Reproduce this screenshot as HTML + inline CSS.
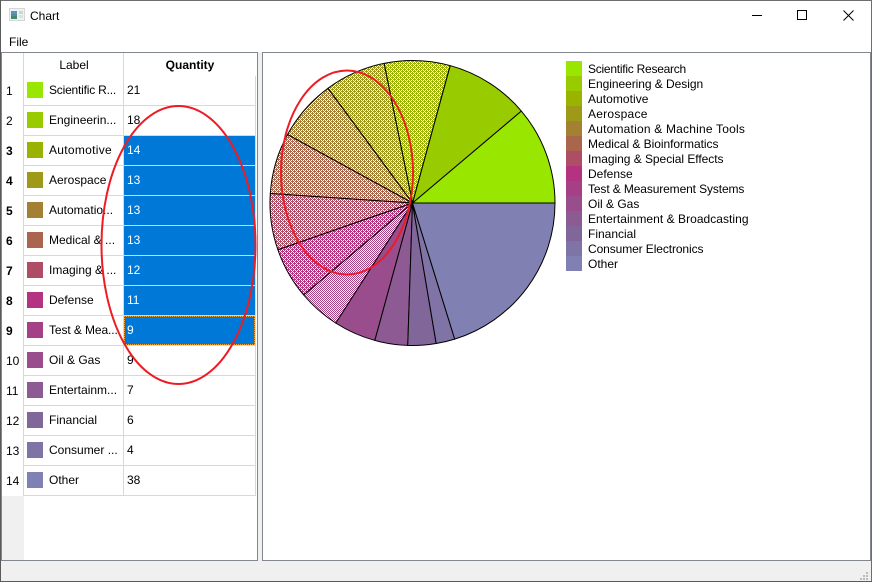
<!DOCTYPE html>
<html><head><meta charset="utf-8"><title>Chart</title>
<style>
html,body{margin:0;padding:0}
body{width:872px;height:582px;overflow:hidden;background:#f0f0f0;position:relative;font:12px/15px "Liberation Sans",sans-serif;color:#000}
div{position:absolute;box-sizing:border-box;white-space:nowrap}
.n{left:6px;width:17px;height:30px;line-height:30px}
.s{left:27px;width:16px;height:16px}
.l{left:49px;height:30px;line-height:29px;width:74px;overflow:hidden}
.v{left:127px;height:30px;line-height:29px}
.h{left:24px;width:232px;height:1px;background:#d8d8d8}
.c{left:124px;width:131px;height:29px;background:#0078d7}
.ls{left:566px;width:16px;height:15px}
.lt{left:588px;height:15px;line-height:17px}
b{font-weight:bold}
</style></head><body>
<div style="left:0;top:0;width:872px;height:52px;background:#fff"></div>
<div style="left:0;top:0;width:872px;height:1px;background:#6e6e6e"></div>
<div style="left:0;top:0;width:1px;height:582px;background:#5a5a5a"></div>
<div style="left:871px;top:0;width:1px;height:582px;background:#6e6e6e"></div>
<div style="left:0;top:581px;width:872px;height:1px;background:#5a5a5a"></div>

<svg style="position:absolute;left:9px;top:8px" width="16" height="14" shape-rendering="crispEdges">
<rect x="0" y="0" width="16" height="13" fill="#d4d6d8"/><rect x="1" y="1" width="14" height="11" fill="#f0f2f2"/>
<rect x="2" y="3" width="6" height="8" fill="#4f8fa0"/><rect x="2" y="3" width="6" height="3" fill="#5a93c8"/><rect x="2" y="8" width="6" height="3" fill="#3f8a68"/>
<rect x="10" y="3" width="4" height="3" fill="#c4dcc8"/><rect x="10" y="7" width="4" height="3" fill="#d8e2e2"/>
</svg>
<div style="left:30px;top:9px">Chart</div>
<div style="left:9px;top:35px">File</div>

<svg style="position:absolute;left:740px;top:0" width="130" height="30">
<path d="M12 15.5h10" stroke="#000" fill="none" shape-rendering="crispEdges"/>
<rect x="57.5" y="10.5" width="9" height="9" stroke="#000" fill="none" shape-rendering="crispEdges"/>
<path d="M103.5 10.5l10 10M113.5 10.5l-10 10" stroke="#000" fill="none" stroke-width="1"/>
</svg>

<!-- table -->
<div style="left:1px;top:52px;width:257px;height:509px;border:1px solid #828790;background:#fff"></div>
<div style="left:2px;top:496px;width:22px;height:64px;background:#f0f0f0"></div>
<div style="left:23px;top:53px;width:1px;height:443px;background:#d8d8d8"></div>
<div style="left:123px;top:53px;width:1px;height:443px;background:#d8d8d8"></div>
<div style="left:255px;top:76px;width:1px;height:420px;background:#d8d8d8"></div>
<div style="left:24px;top:58px;width:100px;text-align:center">Label</div>
<div style="left:124px;top:58px;width:132px;text-align:center"><b>Quantity</b></div>

<div class="h" style="top:105px"></div><div class="h" style="top:135px"></div><div class="h" style="top:165px"></div><div class="h" style="top:195px"></div><div class="h" style="top:225px"></div><div class="h" style="top:255px"></div><div class="h" style="top:285px"></div><div class="h" style="top:315px"></div><div class="h" style="top:345px"></div><div class="h" style="top:375px"></div><div class="h" style="top:405px"></div><div class="h" style="top:435px"></div><div class="h" style="top:465px"></div><div class="h" style="top:495px"></div>

<div class="c" style="top:136px"></div><div class="c" style="top:166px"></div><div class="c" style="top:196px"></div><div class="c" style="top:226px"></div><div class="c" style="top:256px"></div><div class="c" style="top:286px"></div>
<div class="c" style="top:316px;border:1px dotted #f2a33a"></div>

<div class="n" style="top:76px">1</div><div class="s" style="top:82px;background:#99e600"></div><div class="l" style="top:76px;letter-spacing:-.2px">Scientific R...</div><div class="v" style="top:76px">21</div>
<div class="n" style="top:106px">2</div><div class="s" style="top:112px;background:#99cc00"></div><div class="l" style="top:106px">Engineerin...</div><div class="v" style="top:106px">18</div>
<div class="n" style="top:136px"><b>3</b></div><div class="s" style="top:142px;background:#99b300"></div><div class="l" style="top:136px;letter-spacing:.3px">Automotive</div><div class="v" style="top:136px;color:#fff">14</div>
<div class="n" style="top:166px"><b>4</b></div><div class="s" style="top:172px;background:#9f991a"></div><div class="l" style="top:166px">Aerospace</div><div class="v" style="top:166px;color:#fff">13</div>
<div class="n" style="top:196px"><b>5</b></div><div class="s" style="top:202px;background:#a48033"></div><div class="l" style="top:196px">Automatio...</div><div class="v" style="top:196px;color:#fff">13</div>
<div class="n" style="top:226px"><b>6</b></div><div class="s" style="top:232px;background:#a9664d"></div><div class="l" style="top:226px">Medical &amp; ...</div><div class="v" style="top:226px;color:#fff">13</div>
<div class="n" style="top:256px"><b>7</b></div><div class="s" style="top:262px;background:#ae4d66"></div><div class="l" style="top:256px">Imaging &amp; ...</div><div class="v" style="top:256px;color:#fff">12</div>
<div class="n" style="top:286px"><b>8</b></div><div class="s" style="top:292px;background:#b33380"></div><div class="l" style="top:286px">Defense</div><div class="v" style="top:286px;color:#fff">11</div>
<div class="n" style="top:316px"><b>9</b></div><div class="s" style="top:322px;background:#a64086"></div><div class="l" style="top:316px;letter-spacing:-.1px">Test &amp; Mea...</div><div class="v" style="top:316px;color:#fff">9</div>
<div class="n" style="top:346px">10</div><div class="s" style="top:352px;background:#994d8d"></div><div class="l" style="top:346px">Oil &amp; Gas</div><div class="v" style="top:346px">9</div>
<div class="n" style="top:376px">11</div><div class="s" style="top:382px;background:#8d5a93"></div><div class="l" style="top:376px">Entertainm...</div><div class="v" style="top:376px">7</div>
<div class="n" style="top:406px">12</div><div class="s" style="top:412px;background:#806699"></div><div class="l" style="top:406px">Financial</div><div class="v" style="top:406px">6</div>
<div class="n" style="top:436px">13</div><div class="s" style="top:442px;background:#8073a6"></div><div class="l" style="top:436px">Consumer ...</div><div class="v" style="top:436px">4</div>
<div class="n" style="top:466px">14</div><div class="s" style="top:472px;background:#8080b3"></div><div class="l" style="top:466px">Other</div><div class="v" style="top:466px">38</div>

<!-- pie frame -->
<div style="left:262px;top:52px;width:609px;height:509px;border:1px solid #828790;background:#fff"></div>

<div class="ls" style="top:61px;background:#99e600"></div><div class="lt" style="top:61px;letter-spacing:-.25px">Scientific Research</div>
<div class="ls" style="top:76px;background:#99cc00"></div><div class="lt" style="top:76px;letter-spacing:-.05px">Engineering &amp; Design</div>
<div class="ls" style="top:91px;background:#99b300"></div><div class="lt" style="top:91px;letter-spacing:.05px">Automotive</div>
<div class="ls" style="top:106px;background:#9f991a"></div><div class="lt" style="top:106px;letter-spacing:.25px">Aerospace</div>
<div class="ls" style="top:121px;background:#a48033"></div><div class="lt" style="top:121px;letter-spacing:.2px">Automation &amp; Machine Tools</div>
<div class="ls" style="top:136px;background:#a9664d"></div><div class="lt" style="top:136px;letter-spacing:-.04px">Medical &amp; Bioinformatics</div>
<div class="ls" style="top:151px;background:#ae4d66"></div><div class="lt" style="top:151px;letter-spacing:-.04px">Imaging &amp; Special Effects</div>
<div class="ls" style="top:166px;background:#b33380"></div><div class="lt" style="top:166px">Defense</div>
<div class="ls" style="top:181px;background:#a64086"></div><div class="lt" style="top:181px;letter-spacing:-.12px">Test &amp; Measurement Systems</div>
<div class="ls" style="top:196px;background:#994d8d"></div><div class="lt" style="top:196px">Oil &amp; Gas</div>
<div class="ls" style="top:211px;background:#8d5a93"></div><div class="lt" style="top:211px;letter-spacing:.04px">Entertainment &amp; Broadcasting</div>
<div class="ls" style="top:226px;background:#806699"></div><div class="lt" style="top:226px">Financial</div>
<div class="ls" style="top:241px;background:#8073a6"></div><div class="lt" style="top:241px;letter-spacing:-.1px">Consumer Electronics</div>
<div class="ls" style="top:256px;background:#8080b3"></div><div class="lt" style="top:256px">Other</div>

<svg style="position:absolute;left:0;top:0" width="872" height="582">
<defs>
<pattern id="p3" width="4" height="4" patternUnits="userSpaceOnUse"><path fill="#99b300" shape-rendering="crispEdges" d="M0 0h1v1h-1zM2 0h1v1h-1zM0 1h2v1h-2zM3 1h1v1h-1zM0 2h1v1h-1zM2 2h1v1h-1zM1 3h3v1h-3z"/></pattern>
<pattern id="p4" width="4" height="4" patternUnits="userSpaceOnUse"><path fill="#9f991a" shape-rendering="crispEdges" d="M0 0h1v1h-1zM2 0h1v1h-1zM0 1h2v1h-2zM3 1h1v1h-1zM0 2h1v1h-1zM2 2h1v1h-1zM1 3h3v1h-3z"/></pattern>
<pattern id="p5" width="4" height="4" patternUnits="userSpaceOnUse"><path fill="#a48033" shape-rendering="crispEdges" d="M0 0h1v1h-1zM2 0h1v1h-1zM0 1h2v1h-2zM3 1h1v1h-1zM0 2h1v1h-1zM2 2h1v1h-1zM1 3h3v1h-3z"/></pattern>
<pattern id="p6" width="4" height="4" patternUnits="userSpaceOnUse"><path fill="#a9664d" shape-rendering="crispEdges" d="M0 0h1v1h-1zM2 0h1v1h-1zM0 1h2v1h-2zM3 1h1v1h-1zM0 2h1v1h-1zM2 2h1v1h-1zM1 3h3v1h-3z"/></pattern>
<pattern id="p7" width="4" height="4" patternUnits="userSpaceOnUse"><path fill="#ae4d66" shape-rendering="crispEdges" d="M0 0h1v1h-1zM2 0h1v1h-1zM0 1h2v1h-2zM3 1h1v1h-1zM0 2h1v1h-1zM2 2h1v1h-1zM1 3h3v1h-3z"/></pattern>
<pattern id="p8" width="4" height="4" patternUnits="userSpaceOnUse"><path fill="#b33380" shape-rendering="crispEdges" d="M0 0h1v1h-1zM2 0h1v1h-1zM0 1h2v1h-2zM3 1h1v1h-1zM0 2h1v1h-1zM2 2h1v1h-1zM1 3h3v1h-3z"/></pattern>
<pattern id="p9" width="2" height="2" patternUnits="userSpaceOnUse"><path d="M0 0h1v1h-1zM1 1h1v1h-1z" fill="#a64086" shape-rendering="crispEdges"/></pattern>
</defs>
<g stroke="#000" stroke-width="1" stroke-linejoin="round">
<path fill="#99e600" d="M412.5 203L555 203A142.5 142.5 0 0 0 521.34 111.03Z"/>
<path fill="#99cc00" d="M412.5 203L521.34 111.03A142.5 142.5 0 0 0 450.15 65.56Z"/>
<path fill="url(#p3)" d="M412.5 203L450.15 65.56A142.5 142.5 0 0 0 384.11 63.35Z"/>
<path fill="url(#p4)" d="M412.5 203L384.11 63.35A142.5 142.5 0 0 0 327.97 88.29Z"/>
<path fill="url(#p5)" d="M412.5 203L327.97 88.29A142.5 142.5 0 0 0 287.54 134.51Z"/>
<path fill="url(#p6)" d="M412.5 203L287.54 134.51A142.5 142.5 0 0 0 270.31 193.48Z"/>
<path fill="url(#p7)" d="M412.5 203L270.31 193.48A142.5 142.5 0 0 0 277.88 249.74Z"/>
<path fill="url(#p8)" d="M412.5 203L277.88 249.74A142.5 142.5 0 0 0 303.66 294.97Z"/>
<path fill="url(#p9)" d="M412.5 203L303.66 294.97A142.5 142.5 0 0 0 335.82 323.11Z"/>
<path fill="#994d8d" d="M412.5 203L335.82 323.11A142.5 142.5 0 0 0 374.85 340.44Z"/>
<path fill="#8d5a93" d="M412.5 203L374.85 340.44A142.5 142.5 0 0 0 407.74 345.41Z"/>
<path fill="#806699" d="M412.5 203L407.74 345.41A142.5 142.5 0 0 0 436.2 343.52Z"/>
<path fill="#8073a6" d="M412.5 203L436.2 343.52A142.5 142.5 0 0 0 454.72 339.1Z"/>
<path fill="#8080b3" d="M412.5 203L454.72 339.1A142.5 142.5 0 0 0 555 203Z"/>
</g>
<ellipse cx="178.5" cy="245" rx="77" ry="139" fill="none" stroke="#ed1c24" stroke-width="2"/>
<ellipse cx="347" cy="172.5" rx="66" ry="102" fill="none" stroke="#ed1c24" stroke-width="2"/>
<g fill="#bcbcbc" shape-rendering="crispEdges">
<rect x="866" y="572" width="2" height="2"/><rect x="866" y="575" width="2" height="2"/><rect x="866" y="578" width="2" height="2"/>
<rect x="863" y="575" width="2" height="2"/><rect x="863" y="578" width="2" height="2"/><rect x="860" y="578" width="2" height="2"/>
</g>
</svg>
</body></html>
